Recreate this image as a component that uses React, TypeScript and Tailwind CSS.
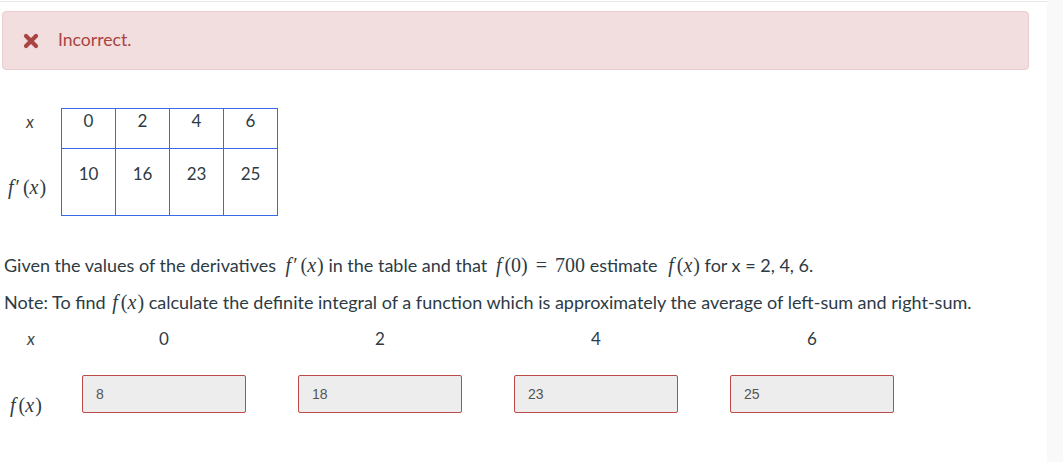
import React from "react";

const lato = { fontFamily: "Lato, 'Noto Sans', sans-serif" };

function Serif({ children, className = "" }: { children: React.ReactNode; className?: string }) {
  return (
    <span
      className={
        "font-['Liberation_Serif','Times_New_Roman',serif] text-[20px] leading-[20px] " + className
      }
    >
      {children}
    </span>
  );
}

function FPrime({ className = "" }: { className?: string }) {
  return (
    <Serif className={className}>
      <i>f</i>
      <span className="ml-[2px]">′</span>
      <span className="ml-[3px]">(</span>
      <i>x</i>
      <span className="ml-[1px]">)</span>
    </Serif>
  );
}

function Fx({ className = "" }: { className?: string }) {
  return (
    <Serif className={className}>
      <i>f</i>
      <span className="ml-[3px]">(</span>
      <i>x</i>
      <span className="ml-[1px]">)</span>
    </Serif>
  );
}

export default function App() {
  const top = ["0", "2", "4", "6"];
  const vals = ["10", "16", "23", "25"];
  const inputs = ["8", "18", "23", "25"];
  return (
    <div
      className="flex w-[1063px] h-[462px] bg-white text-[#2d3b45] font-['Lato',sans-serif] overflow-hidden"
      style={lato}
    >
      <div className="w-[1047px] flex flex-col">
        <div className="mt-px h-px bg-[#e6e6e6]" />
        {/* Alert */}
        <div className="mt-[9px] ml-[2px] w-[1027px] h-[59px] rounded-[4px] border border-[#ebccd1] bg-[#f2dede] flex items-center text-[#a94442]">
          <svg width="16" height="16" viewBox="0 0 16 16" className="ml-[20px] mt-[1px]">
            <path
              d="M3 3 L13 13 M13 3 L3 13"
              stroke="#a94442"
              strokeWidth="4.2"
              strokeLinecap="round"
            />
          </svg>
          <span className="ml-[19px] text-[17.6px] leading-[20px] mb-[2px]">Incorrect.</span>
        </div>

        {/* Derivative table */}
        <div className="mt-[38px] flex">
          <div className="w-[61px] flex flex-col">
            <div className="h-[41px] flex justify-center pt-[4px] pr-[1px]">
              <i className="text-[17px] leading-[20px] text-[#444]">x</i>
            </div>
            <div className="h-[67px] pl-[8px] pt-[28px] leading-[20px]">
              <FPrime />
            </div>
          </div>
          <div className="flex flex-col border-l border-t border-[#3b68e4]">
            <div className="flex">
              {top.map((t) => (
                <div
                  key={t}
                  className="w-[54px] h-[40px] border-r border-b border-[#3b68e4] flex justify-center pt-[2px] text-[17px] leading-[20px]"
                >
                  {t}
                </div>
              ))}
            </div>
            <div className="flex">
              {vals.map((t) => (
                <div
                  key={t}
                  className="w-[54px] h-[67px] border-r border-b border-[#3b68e4] flex justify-center pt-[15px] text-[17px] leading-[20px]"
                >
                  {t}
                </div>
              ))}
            </div>
          </div>
        </div>

        {/* Paragraphs */}
        <p className="mt-[37px] ml-[4px] text-[18px] leading-[24px] whitespace-nowrap">
          Given the values of the derivatives <FPrime className="ml-[5px]" /> in the table and that{" "}
          <Serif className="ml-[4px]">
            <i>f</i>
            <span className="ml-[3px]">(0)</span>
            <span className="mx-[8px]">=</span>700
          </Serif>{" "}
          estimate <Fx className="ml-[6px]" /> for x = 2, 4, 6.
        </p>
        <p className="mt-[13px] ml-[4px] text-[18px] leading-[24px] whitespace-nowrap">
          Note: To find <Fx className="ml-[2px]" /> calculate the definite integral of a function which
          is approximately the average of left-sum and right-sum.
        </p>

        {/* Answer grid */}
        <div className="mt-[15px] grid grid-cols-[56px_216px_216px_216px_216px]">
          <div className="flex justify-center pl-[6px]">
            <i className="text-[17px] leading-[20px] text-[#444]">x</i>
          </div>
          {top.map((t) => (
            <div key={t} className="flex justify-center text-[17px] leading-[20px]">
              {t}
            </div>
          ))}
          <div className="mt-[26px] pl-[10px] pt-[20px] leading-[20px]">
            <Fx />
          </div>
          {inputs.map((v) => (
            <div key={v} className="mt-[26px] flex justify-center">
              <div className="w-[164px] h-[38px] rounded-[2px] border border-[#b94a48] bg-[#ededed] flex items-center pl-[13px] font-['Liberation_Sans',Arial,sans-serif] text-[14px] text-[#555]">
                {v}
              </div>
            </div>
          ))}
        </div>
      </div>
      <div className="flex-1 bg-[#f9f9f9]" />
    </div>
  );
}
